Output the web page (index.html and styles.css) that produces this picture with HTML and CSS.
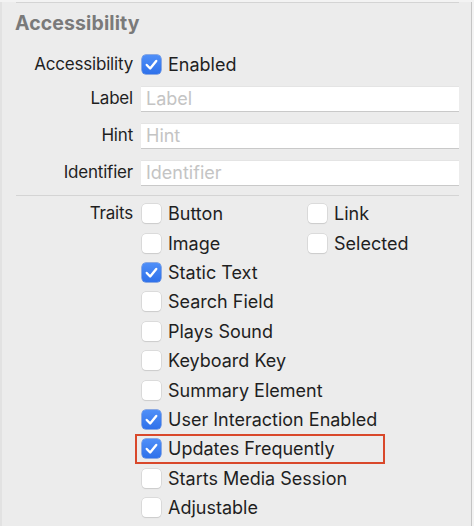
FILE: index.html
```html
<!DOCTYPE html>
<html>
<head>
<meta charset="utf-8">
<link rel="stylesheet" href="styles.css">
</head>
<body>
<div class="panel">
  <div class="rule top"></div>
  <h2 class="header">Accessibility</h2>
  <div class="form">
    <div class="lbl">Accessibility</div>
    <label class="check"><span class="box on"><svg viewBox="0 0 20 20"><path d="M5 10.5 L8.6 14.2 L15 6.2"/></svg></span>Enabled</label>
    <div class="lbl">Label</div>
    <div class="field">Label</div>
    <div class="lbl">Hint</div>
    <div class="field">Hint</div>
    <div class="lbl">Identifier</div>
    <div class="field">Identifier</div>
  </div>
  <div class="rule mid"></div>
  <div class="traits">
    <div class="lbl">Traits</div>
    <div class="col">
      <label class="check"><span class="box"></span>Button</label>
      <label class="check"><span class="box"></span>Image</label>
      <label class="check"><span class="box on"><svg viewBox="0 0 20 20"><path d="M5 10.5 L8.6 14.2 L15 6.2"/></svg></span>Static Text</label>
      <label class="check"><span class="box"></span>Search Field</label>
      <label class="check"><span class="box"></span>Plays Sound</label>
      <label class="check"><span class="box"></span>Keyboard Key</label>
      <label class="check"><span class="box"></span>Summary Element</label>
      <label class="check"><span class="box on"><svg viewBox="0 0 20 20"><path d="M5 10.5 L8.6 14.2 L15 6.2"/></svg></span>User Interaction Enabled</label>
      <label class="check highlight"><span class="box on"><svg viewBox="0 0 20 20"><path d="M5 10.5 L8.6 14.2 L15 6.2"/></svg></span>Updates Frequently</label>
      <label class="check"><span class="box"></span>Starts Media Session</label>
      <label class="check"><span class="box"></span>Adjustable</label>
    </div>
    <div class="col">
      <label class="check"><span class="box"></span>Link</label>
      <label class="check"><span class="box"></span>Selected</label>
    </div>
  </div>
</div>
</body>
</html>
```

FILE: styles.css
```css
html, body {
  margin: 0;
  padding: 0;
  background: #f3f3f3;
}
body {
  width: 474px;
  height: 526px;
  overflow: hidden;
  font-family: Inter, "Liberation Sans", sans-serif;
  color: #1f1f1f;
}
.panel {
  width: 469px;
  height: 526px;
  background: #ececec;
  border-left: 2px solid #e2e2e2;
  border-right: 1px solid #c4c4c4;
  box-sizing: content-box;
}
.rule {
  height: 1px;
  background: #d4d4d4;
  margin-left: 14px;
  margin-right: 12px;
}
.rule.top {
  margin-top: 2px;
}
.rule.mid {
  margin-top: 10px;
}
.header {
  margin: 0;
  padding-left: 13px;
  height: 51px;
  line-height: 40px;
  font-size: 19.5px;
  font-weight: 700;
  color: #7a7a7a;
  letter-spacing: 0.1px;
}
.form {
  display: grid;
  grid-template-columns: 131px 318px;
  grid-template-rows: 20px 25px 25px 25px;
  column-gap: 8px;
  row-gap: 12px;
  align-items: center;
}
.lbl {
  text-align: right;
  font-size: 17px;
  letter-spacing: -0.2px;
  line-height: 25px;
}
.check {
  display: flex;
  align-items: center;
  font-size: 18px;
  height: 29.4px;
  white-space: nowrap;
}
.form .check {
  height: 20px;
}
.box {
  width: 19px;
  height: 19px;
  border-radius: 4px;
  background: #ffffff;
  box-shadow: 0 0 0 0.5px #c9c9c9, 0 1px 1px rgba(0,0,0,0.12);
  margin-right: 7px;
  margin-left: 1px;
  flex: none;
  display: flex;
}
.box.on {
  background: linear-gradient(#4f8ff8, #2f71ea);
  box-shadow: 0 0 0 0.5px #2a66d8;
}
.box svg {
  width: 19px;
  height: 19px;
}
.box path {
  fill: none;
  stroke: #fff;
  stroke-width: 2.5;
  stroke-linecap: round;
  stroke-linejoin: round;
}
.field {
  height: 25px;
  background: #fff;
  border-top: 1px solid #e4e4e4;
  box-shadow: 0 1px 0 #c9c9c9;
  box-sizing: border-box;
  padding-left: 5px;
  font-size: 18px;
  line-height: 23px;
  color: #c4c4c4;
}
.traits {
  display: grid;
  grid-template-columns: 131px 158px 150px;
  column-gap: 8px;
  padding-top: 3px;
}
.traits .lbl {
  line-height: 29.4px;
}
.highlight {
  outline: 2px solid #d9482b;
  outline-offset: -2px;
  margin-left: -6px;
  padding-left: 6px;
  width: 250px;
  box-sizing: border-box;
}
```
